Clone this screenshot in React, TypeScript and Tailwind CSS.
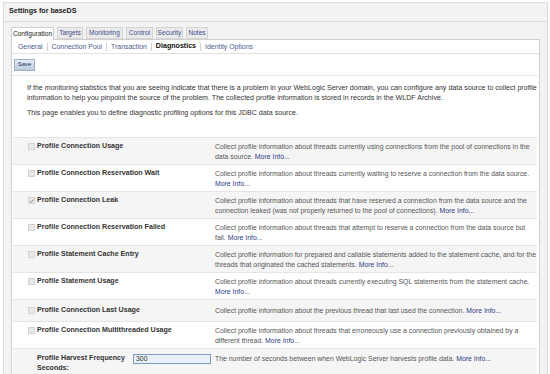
const rows = [
  {
    label: "Profile Connection Usage",
    lines: ["Collect profile information about threads currently using connections from the pool of connections in the", "data source."],
  },
  {
    label: "Profile Connection Reservation Wait",
    lines: ["Collect profile information about threads currently waiting to reserve a connection from the data source.", ""],
  },
  {
    label: "Profile Connection Leak",
    lines: [
      "Collect profile information about threads that have reserved a connection from the data source and the",
      "connection leaked (was not properly returned to the pool of connections).",
    ],
    checked: true,
  },
  {
    label: "Profile Connection Reservation Failed",
    lines: ["Collect profile information about threads that attempt to reserve a connection from the data source but", "fail."],
  },
  {
    label: "Profile Statement Cache Entry",
    lines: [
      "Collect profile information for prepared and callable statements added to the statement cache, and for the",
      "threads that originated the cached statements.",
    ],
  },
  {
    label: "Profile Statement Usage",
    lines: ["Collect profile information about threads currently executing SQL statements from the statement cache.", ""],
  },
  {
    label: "Profile Connection Last Usage",
    lines: ["Collect profile information about the previous thread that last used the connection."],
  },
  {
    label: "Profile Connection Multithreaded Usage",
    lines: ["Collect profile information about threads that erroneously use a connection previously obtained by a", "different thread."],
  },
];

const tabs = [
  { name: "Configuration", w: "w-[43px]" },
  { name: "Targets", w: "w-[26px]" },
  { name: "Monitoring", w: "w-[37px]" },
  { name: "Control", w: "w-[27px]" },
  { name: "Security", w: "w-[27px]" },
  { name: "Notes", w: "w-[22px]" },
];
const subTabs = ["General", "Connection Pool", "Transaction", "Diagnostics", "Identity Options"];

function MoreInfo() {
  return <span className="text-[#2e3a86]">More Info...</span>;
}

function Checkbox({ checked }: { checked?: boolean }) {
  return (
    <span className="mt-[1px] flex h-[7px] w-[7px] shrink-0 items-center justify-center border border-[#d2d2d2] bg-[#e9e9e9]">
      {checked ? (
        <svg width="6" height="6" viewBox="0 0 6 6">
          <path d="M0.8 3.1 L2.3 4.6 L5.3 1.2" fill="none" stroke="#777" strokeWidth="1" />
        </svg>
      ) : null}
    </span>
  );
}

export default function App() {
  return (
    <div className="h-[374px] w-[550px] overflow-hidden bg-white font-['Liberation_Sans',Arial,sans-serif] text-[6.9px] leading-[9.5px] text-[#333]">
      <div className="ml-[3px] mr-[2px] mt-[2px] h-[400px] border border-[#dadada] bg-[#f3f3f3]">
        <div className="flex h-[19px] items-center border-b border-[#dcdcdc] pl-[5px] text-[7.1px] font-bold text-[#222]">
          Settings for baseDS
        </div>
        <div className="flex gap-[3px] pl-[7px] pt-[5px] text-[6.6px]">
          {tabs.map((t, i) =>
            i === 0 ? (
              <div
                key={t.name}
                className={`relative z-10 -mb-px flex h-[13px] ${t.w} items-center justify-center whitespace-nowrap border border-b-0 border-[#cfcfcf] bg-white text-[#222]`}
              >
                {t.name}
              </div>
            ) : (
              <div
                key={t.name}
                className={`flex h-[12px] ${t.w} items-center justify-center whitespace-nowrap border border-[#d4d4d4] bg-[#ebebeb] text-[#3d4b8c]`}
              >
                {t.name}
              </div>
            )
          )}
        </div>
        <div className="mx-[7px] border border-[#cfcfcf] bg-white">
          <div className="flex h-[14px] items-center border-b border-[#e2e2e2] pl-[6px] text-[#4b5a8e]">
            {subTabs.map((s, i) => (
              <div key={s} className="flex items-center">
                {i > 0 ? <span className="mx-[4px] h-[8px] w-px bg-[#d0d0d0]" /> : null}
                <span className={s === "Diagnostics" ? "text-[7.1px] font-bold text-[#111]" : ""}>{s}</span>
              </div>
            ))}
          </div>
          <div className="flex h-[22px] items-center border-b border-[#e6e6e6] pl-[2px]">
            <button className="flex h-[12px] w-[21px] items-center justify-center border border-[#9fb0c6] bg-gradient-to-b from-[#e4ecf5] to-[#bccbdd] text-[6px] text-[#1f2f5c]">
              Save
            </button>
          </div>
          <div className="px-[15px] pt-[8px] text-[7.1px] text-[#333]">
            <p className="whitespace-nowrap">
              If the monitoring statistics that you are seeing indicate that there is a problem in your WebLogic Server domain, you can configure any data source to collect profile
              <br />
              information to help you pinpoint the source of the problem. The collected profile information is stored in records in the WLDF Archive.
            </p>
            <p className="mt-[5.5px] whitespace-nowrap">This page enables you to define diagnostic profiling options for this JDBC data source.</p>
          </div>
          <div className="ml-px mr-[2px] mt-[19px] border-t border-[#e4e4e4]">
            {rows.map((r, i) => (
              <div
                key={r.label}
                className={`flex border-b border-[#e4e4e4] ${i % 2 === 0 ? "bg-[#f5f5f5]" : "bg-white"} ${
                  r.lines.length === 1 ? "pb-[5.5px] pt-[6px]" : "pb-[3px] pt-[4px]"
                }`}
              >
                <div className="flex w-[202px] shrink-0 items-start gap-[2px] pl-[15px] text-[7.1px] font-bold text-[#333]">
                  <Checkbox checked={r.checked} />
                  <span>{r.label}</span>
                </div>
                <div className="whitespace-nowrap text-[#555]">
                  {r.lines.map((l, j) => (
                    <div key={j}>
                      {l}
                      {j === r.lines.length - 1 ? (
                        <>
                          {l ? " " : ""}
                          <MoreInfo />
                        </>
                      ) : null}
                    </div>
                  ))}
                </div>
              </div>
            ))}
            <div className="flex bg-[#f5f5f5] pb-[4px] pt-[5px]">
              <div className="flex w-[202px] shrink-0 items-start pl-[24px] text-[7.1px] font-bold text-[#333]">
                <span className="w-[96px]">
                  Profile Harvest Frequency
                  <br />
                  Seconds:
                </span>
                <input
                  defaultValue="300"
                  className="-mt-[0.5px] h-[10px] w-[78px] border border-[#7f9dc4] bg-[#e8f1fb] px-[2px] text-[6.9px] font-normal text-[#333] outline-none"
                />
              </div>
              <div className="whitespace-nowrap text-[#555]">
                The number of seconds between when WebLogic Server harvests profile data. <MoreInfo />
              </div>
            </div>
          </div>
        </div>
      </div>
    </div>
  );
}
